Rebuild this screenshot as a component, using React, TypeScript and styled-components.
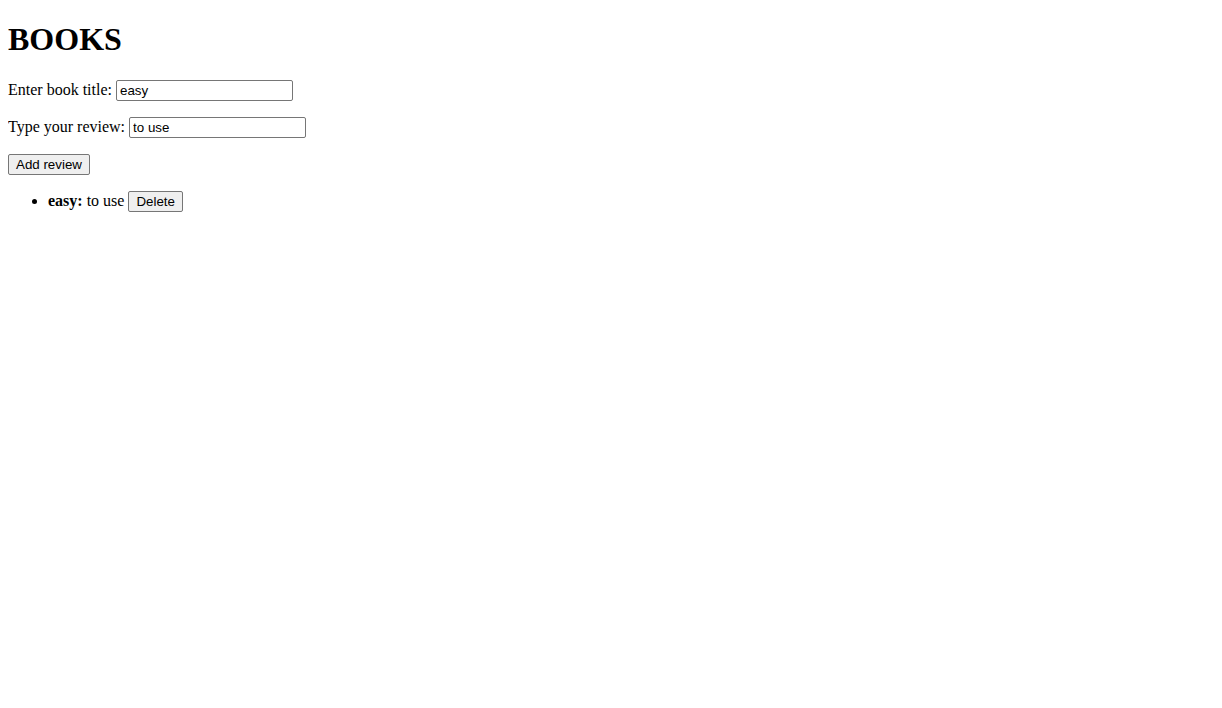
import React, { useState } from "react";
import styled, { createGlobalStyle } from "styled-components";

const GlobalStyle = createGlobalStyle`
  body {
    margin: 8px;
    font-family: "Liberation Serif", "Times New Roman", serif;
    font-size: 16px;
    color: #000;
    background: #fff;
  }
`;

const Title = styled.h1`
  font-size: 32px;
  font-weight: bold;
  margin: 13.44px 0 21.44px;
`;

const Field = styled.div`
  margin: 16px 0;
`;

const TextInput = styled.input`
  box-sizing: border-box;
  font-family: "Liberation Sans", Arial, sans-serif;
  font-size: 13.333px;
  width: 177px;
  height: 21px;
  padding: 1px 3px;
  border: 1px solid #767676;
  border-radius: 2px;
  color: #000;
  background: #fff;
  vertical-align: baseline;
`;

const Button = styled.button`
  box-sizing: border-box;
  font-family: "Liberation Sans", Arial, sans-serif;
  font-size: 13.333px;
  height: 21px;
  padding: 0 7px;
  border: 1px solid #767676;
  border-radius: 2px;
  background: #efefef;
  color: #000;
  cursor: pointer;
`;

const ReviewList = styled.ul`
  margin: 16px 0;
  padding-left: 40px;
`;

const ReviewItem = styled.li`
  list-style: disc;
`;

type Review = { id: number; title: string; text: string };

export default function App() {
  const [title, setTitle] = useState("easy");
  const [text, setText] = useState("to use");
  const [reviews, setReviews] = useState<Review[]>([
    { id: 1, title: "easy", text: "to use" },
  ]);

  const addReview = () => {
    if (!title.trim()) return;
    setReviews([...reviews, { id: Date.now(), title, text }]);
  };

  const deleteReview = (id: number) => {
    setReviews(reviews.filter((r) => r.id !== id));
  };

  return (
    <>
      <GlobalStyle />
      <Title>BOOKS</Title>
      <Field>
        Enter book title:{" "}
        <TextInput value={title} onChange={(e) => setTitle(e.target.value)} />
      </Field>
      <Field>
        Type your review:{" "}
        <TextInput value={text} onChange={(e) => setText(e.target.value)} />
      </Field>
      <Field>
        <Button onClick={addReview}>Add review</Button>
      </Field>
      <ReviewList>
        {reviews.map((r) => (
          <ReviewItem key={r.id}>
            <b>{r.title}:</b> {r.text}{" "}
            <Button onClick={() => deleteReview(r.id)}>Delete</Button>
          </ReviewItem>
        ))}
      </ReviewList>
    </>
  );
}
